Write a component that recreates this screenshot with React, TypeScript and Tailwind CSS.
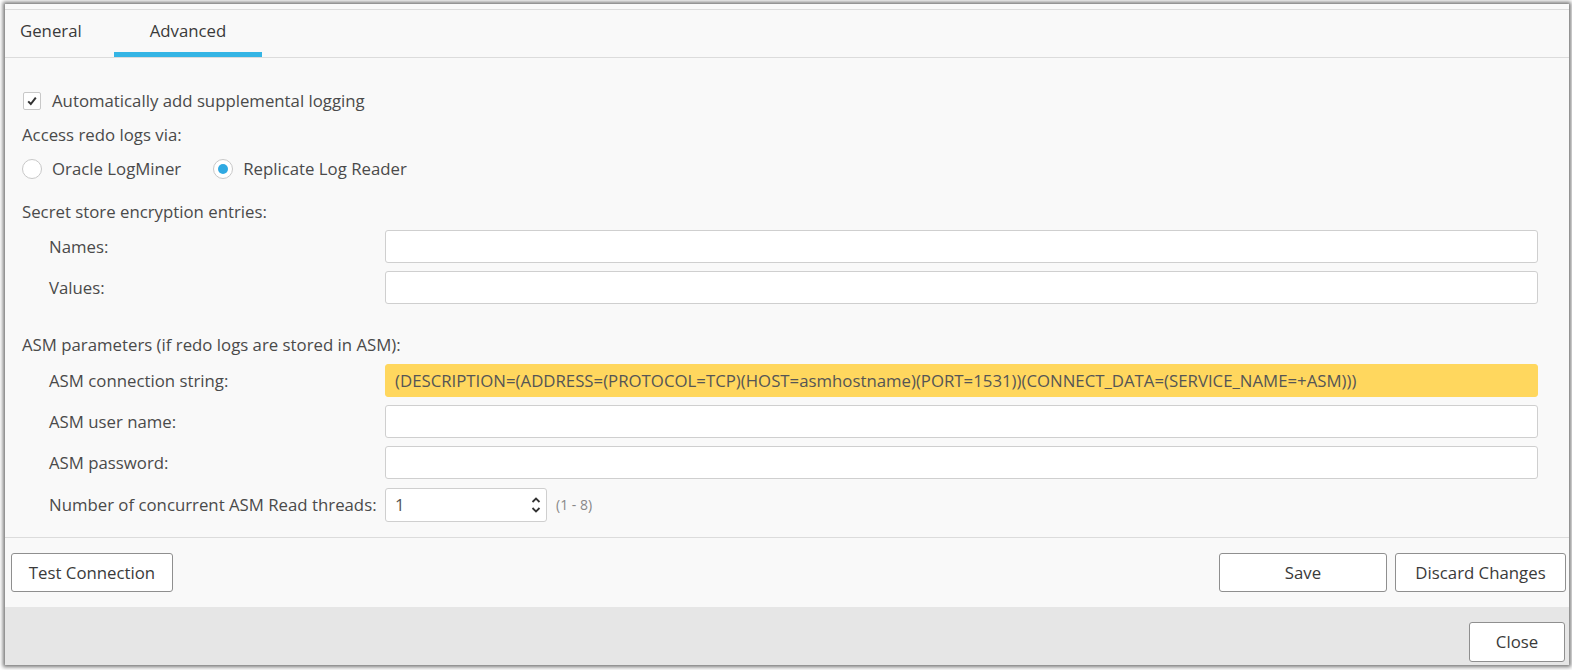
import React from "react";

const font = { fontFamily: "'Open Sans', 'Noto Sans', sans-serif" };

const Field = ({ label, value, highlight }: { label: string; value?: string; highlight?: boolean }) => (
  <div className="flex items-center h-[41px]">
    <div className="w-[363px] shrink-0 pl-[27px] text-[#4a4a4a]">{label}</div>
    <div
      className={`flex-1 h-[33px] rounded-[3px] border flex items-center px-[9px] text-[#555] whitespace-nowrap overflow-hidden ${
        highlight ? "bg-[#ffd75e] border-[#ffd75e]" : "bg-white border-[#cfcfcf]"
      }`}
    >
      {value}
    </div>
  </div>
);

export default function App() {
  return (
    <div className="w-[1572px] h-[670px] bg-white text-[16.8px]" style={font}>
      <div className="ml-[5px] mt-[4px] w-[1564px] h-[661px] bg-[#f9f9f9] flex flex-col shadow-[0_0_4px_2px_rgba(0,0,0,0.55)]">
        {/* tabs */}
        <div className="mt-[5px] h-[49px] border-t border-b border-[#dcdcdc] flex items-stretch text-[#3a3a3a]">
          <div className="w-[109px] flex items-center pl-[15px] pb-[6px]">General</div>
          <div className="w-[148px] flex items-center justify-center border-b-[5px] border-[#35b5e5] pb-[1px]">
            Advanced
          </div>
        </div>

        {/* body */}
        <div className="flex-1 flex flex-col pl-[17px] pr-[31px] pt-[31px] text-[#4a4a4a]">
          <div className="flex items-center h-[24px]">
            <div className="w-[18px] h-[18px] ml-[1px] bg-white border border-[#c8c8c8] rounded-[2px] flex items-center justify-center">
              <svg width="12" height="12" viewBox="0 0 12 12">
                <path d="M2.2 6.4 L4.8 9 L9.8 2.6" fill="none" stroke="#333" strokeWidth="2" />
              </svg>
            </div>
            <span className="ml-[11px]">Automatically add supplemental logging</span>
          </div>
          <div className="mt-[10px] h-[24px] flex items-center">Access redo logs via:</div>
          <div className="mt-[10px] h-[24px] flex items-center">
            <div className="w-[20px] h-[20px] rounded-full bg-white border border-[#c8c8c8]" />
            <span className="ml-[10px]">Oracle LogMiner</span>
            <div className="ml-[32px] w-[20px] h-[20px] rounded-full bg-white border border-[#c8c8c8] flex items-center justify-center">
              <div className="w-[10px] h-[10px] rounded-full bg-[#2fa9e2]" />
            </div>
            <span className="ml-[10px]">Replicate Log Reader</span>
          </div>

          <div className="mt-[19px] h-[24px] flex items-center">Secret store encryption entries:</div>
          <div className="mt-[2px]">
            <Field label="Names:" />
            <Field label="Values:" />
          </div>

          <div className="mt-[25px] h-[24px] flex items-center">ASM parameters (if redo logs are stored in ASM):</div>
          <div className="mt-[3px]">
            <Field
              label="ASM connection string:"
              value="(DESCRIPTION=(ADDRESS=(PROTOCOL=TCP)(HOST=asmhostname)(PORT=1531))(CONNECT_DATA=(SERVICE_NAME=+ASM)))"
              highlight
            />
            <Field label="ASM user name:" />
            <Field label="ASM password:" />
            <div className="mt-[1px] flex items-center h-[41px]">
              <div className="w-[363px] shrink-0 pl-[27px] text-[#4a4a4a] whitespace-nowrap">Number of concurrent ASM Read threads:</div>
              <div className="w-[162px] h-[34px] rounded-[3px] border border-[#cfcfcf] bg-white flex items-center pl-[9px] pr-[4px] text-[#555]">
                <span className="flex-1">1</span>
                <svg width="12" height="22" viewBox="0 0 12 22">
                  <path d="M2.5 8 L6 4.5 L9.5 8" fill="none" stroke="#333" strokeWidth="1.8" />
                  <path d="M2.5 14 L6 17.5 L9.5 14" fill="none" stroke="#333" strokeWidth="1.8" />
                </svg>
              </div>
              <span className="ml-[9px] text-[14px] text-[#888]">(1 - 8)</span>
            </div>
          </div>
        </div>

        {/* action bar */}
        <div className="h-[70px] border-t border-[#dcdcdc] flex items-start pt-[15px] pl-[6px] pr-[3px]">
          <button className="h-[39px] w-[162px] bg-white border border-[#8f8f8f] rounded-[3px] text-[#3a3a3a]">
            Test Connection
          </button>
          <div className="flex-1" />
          <button className="h-[39px] w-[168px] bg-white border border-[#8f8f8f] rounded-[3px] text-[#3a3a3a]">
            Save
          </button>
          <button className="ml-[8px] h-[39px] w-[171px] bg-white border border-[#8f8f8f] rounded-[3px] text-[#3a3a3a]">
            Discard Changes
          </button>
        </div>

        {/* footer */}
        <div className="h-[58px] bg-[#e6e6e6] flex items-start justify-end pt-[15px] pr-[4px]">
          <button className="h-[40px] w-[96px] bg-white border border-[#8f8f8f] rounded-[3px] text-[#3a3a3a]">
            Close
          </button>
        </div>
      </div>
    </div>
  );
}
